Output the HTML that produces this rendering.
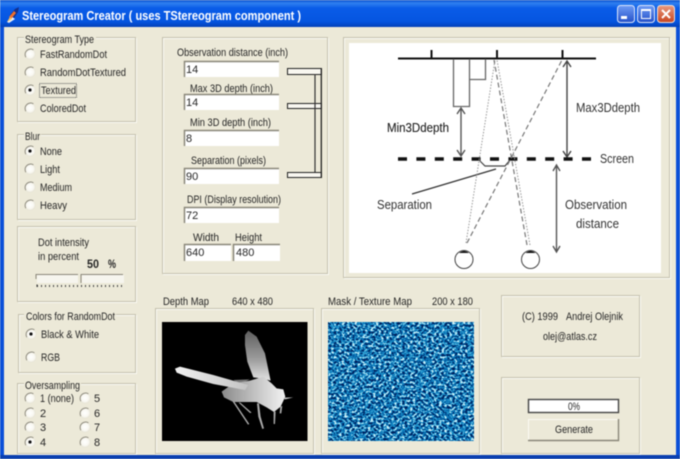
<!DOCTYPE html>
<html><head><meta charset="utf-8"><style>
html,body{margin:0;padding:0;width:680px;height:459px;overflow:hidden;background:#ece9d8}
svg{display:block;filter:blur(.45px)}
text{font-family:"Liberation Sans",sans-serif;font-size:11px;fill:#262626}
.g{fill:none;stroke:#c4c1ae;stroke-width:1}
.gw{fill:none;stroke:#fbfaf4;stroke-width:1}
.ed{fill:#fff}
.edl{stroke:#8a877a;stroke-width:1.5;fill:none}
</style></head><body>
<svg width="680" height="459" viewBox="0 0 680 459" xmlns="http://www.w3.org/2000/svg">
<defs>
<linearGradient id="tb" x1="0" y1="0" x2="0" y2="1"><stop offset="0" stop-color="#0a4fd0"/><stop offset=".12" stop-color="#2f80f0"/><stop offset=".3" stop-color="#0a5ce8"/><stop offset=".8" stop-color="#0555e0"/><stop offset="1" stop-color="#0340b8"/></linearGradient>
<linearGradient id="bb" x1="0" y1="0" x2="0" y2="1"><stop offset="0" stop-color="#6f9cf5"/><stop offset="1" stop-color="#2450c8"/></linearGradient>
<linearGradient id="bx" x1="0" y1="0" x2="0" y2="1"><stop offset="0" stop-color="#e89a80"/><stop offset="1" stop-color="#c8451f"/></linearGradient>
<linearGradient id="w1" x1="0" y1="0" x2="0" y2="1"><stop offset="0" stop-color="#5e5e5e"/><stop offset=".6" stop-color="#a0a0a0"/><stop offset="1" stop-color="#e4e4e4"/></linearGradient>
<linearGradient id="w2" x1="0" y1="0" x2="1" y2="0"><stop offset="0" stop-color="#f0f0f0"/><stop offset="1" stop-color="#c4c4c4"/></linearGradient>
<linearGradient id="bd" x1="0" y1="0" x2="1" y2="0"><stop offset="0" stop-color="#8a8a8a"/><stop offset=".5" stop-color="#c0c0c0"/><stop offset="1" stop-color="#f2f2f2"/></linearGradient>
<radialGradient id="rd"><stop offset="0" stop-color="#fff"/><stop offset=".7" stop-color="#f8f7f0"/><stop offset="1" stop-color="#e4e1d2"/></radialGradient>
<filter id="tex" x="0" y="0" width="100%" height="100%" color-interpolation-filters="sRGB">
<feTurbulence type="fractalNoise" baseFrequency=".38 .44" numOctaves="2" seed="7"/>
<feColorMatrix type="matrix" values="2.6 0 0 0 -.85 2.6 0 0 0 -.85 2.6 0 0 0 -.85 0 0 0 0 1"/>
<feComponentTransfer>
<feFuncR type="table" tableValues="0 0 0 .02 .04 .07 .12 .25 .5 .75 .85"/>
<feFuncG type="table" tableValues=".12 .18 .28 .38 .46 .52 .58 .66 .8 .9 .95"/>
<feFuncB type="table" tableValues=".35 .42 .55 .66 .72 .76 .8 .84 .9 .95 .98"/>
</feComponentTransfer>
</filter>
<filter id="sb"><feGaussianBlur stdDeviation=".6"/></filter>
<g id="ru"><circle r="5.500" fill="url(#rd)"/><path d="M-4.200 3.200A5.500 5.500 0 0 1 3.400-4.200" fill="none" stroke="#8f8c7e" stroke-width="1"/></g>
<g id="rc"><use href="#ru"/><circle r="1.600" fill="#111"/></g>
</defs>

<!-- window frame -->
<rect width="680" height="459" fill="#0a4fd8"/>
<rect x="0" y="0" width="680" height="27" fill="url(#tb)"/>
<rect x="0" y="455" width="680" height="4" fill="#0a3fb0"/>
<rect x="4" y="27" width="672" height="428" fill="#ece9d8"/>

<!-- title icon -->
<path d="M7 22L11 16L15 19L9 23Z" fill="#e8eef8"/>
<path d="M10 15L15 9L19 7L18 12L14 18Z" fill="#15308a"/>
<path d="M9 17L14 11L16 13L11 19Z" fill="#f0702a"/>
<path d="M7 22L10 17L12 19Z" fill="#f4c060"/>
<text x="22" y="20" style="font-size:13px;font-weight:bold;fill:#fff" textLength="279" lengthAdjust="spacingAndGlyphs">Stereogram Creator ( uses TStereogram component )</text>

<!-- window buttons -->
<rect x="617.500" y="5.500" width="17" height="17" rx="3" fill="url(#bb)" stroke="#dde6fa"/>
<rect x="621" y="16" width="6" height="3" fill="#fff"/>
<rect x="637.500" y="5.500" width="17" height="17" rx="3" fill="url(#bb)" stroke="#dde6fa"/>
<rect x="641.500" y="9.500" width="9" height="9" fill="none" stroke="#fff"/><rect x="641" y="9" width="10" height="2" fill="#fff"/>
<rect x="657.500" y="5.500" width="17" height="17" rx="3" fill="url(#bx)" stroke="#f0e0d8"/>
<path d="M662 10L670 18M670 10L662 18" stroke="#fff" stroke-width="2"/>

<!-- group boxes -->
<g>
<rect class="gw" x="18.500" y="38.500" width="118" height="84"/><rect class="g" x="17.500" y="37.500" width="118" height="84"/>
<rect class="gw" x="18.500" y="135.500" width="118" height="85"/><rect class="g" x="17.500" y="134.500" width="118" height="85"/>
<rect class="gw" x="18.500" y="227.500" width="118" height="75"/><rect class="g" x="17.500" y="226.500" width="118" height="75"/>
<rect class="gw" x="19.500" y="315.500" width="117" height="58"/><rect class="g" x="18.500" y="314.500" width="117" height="58"/>
<rect class="gw" x="18.500" y="384.500" width="118" height="70"/><rect class="g" x="17.500" y="383.500" width="118" height="70"/>
<rect class="gw" x="163.500" y="38.500" width="165" height="236"/><rect class="g" x="162.500" y="37.500" width="165" height="236"/>
<rect class="gw" x="344.500" y="38.500" width="326" height="240"/><rect class="g" x="343.500" y="37.500" width="326" height="240"/>
<rect class="gw" x="156.500" y="309.500" width="158" height="145"/><rect class="g" x="155.500" y="308.500" width="158" height="145"/>
<rect class="gw" x="322.500" y="309.500" width="158" height="145"/><rect class="g" x="321.500" y="308.500" width="158" height="145"/>
<rect class="gw" x="502.500" y="296.500" width="138" height="61"/><rect class="g" x="501.500" y="295.500" width="138" height="61"/>
<rect class="gw" x="502.500" y="378.500" width="138" height="76"/><rect class="g" x="501.500" y="377.500" width="138" height="76"/>
</g>

<!-- Stereogram Type -->
<rect x="24" y="32" width="72" height="10" fill="#ece9d8"/>
<text x="25" y="43" textLength="69" lengthAdjust="spacingAndGlyphs">Stereogram Type</text>
<use href="#ru" x="30" y="54"/><text x="40" y="58" textLength="67" lengthAdjust="spacingAndGlyphs">FastRandomDot</text>
<use href="#ru" x="30" y="72"/><text x="40" y="76" textLength="86" lengthAdjust="spacingAndGlyphs">RandomDotTextured</text>
<use href="#rc" x="30" y="90"/><text x="41" y="94" textLength="35" lengthAdjust="spacingAndGlyphs">Textured</text>
<rect x="39.500" y="83.500" width="37" height="14" fill="none" stroke="#555" stroke-dasharray="1 1"/>
<use href="#ru" x="30" y="108"/><text x="40" y="112" textLength="46" lengthAdjust="spacingAndGlyphs">ColoredDot</text>

<!-- Blur -->
<rect x="24" y="129" width="17" height="10" fill="#ece9d8"/>
<text x="25" y="140" textLength="15" lengthAdjust="spacingAndGlyphs">Blur</text>
<use href="#rc" x="30" y="151"/><text x="40" y="155" textLength="22" lengthAdjust="spacingAndGlyphs">None</text>
<use href="#ru" x="30" y="169"/><text x="40" y="173" textLength="20" lengthAdjust="spacingAndGlyphs">Light</text>
<use href="#ru" x="30" y="187"/><text x="40" y="191" textLength="32" lengthAdjust="spacingAndGlyphs">Medium</text>
<use href="#ru" x="30" y="205"/><text x="40" y="209" textLength="27" lengthAdjust="spacingAndGlyphs">Heavy</text>

<!-- Dot intensity -->
<text x="38" y="246" textLength="51" lengthAdjust="spacingAndGlyphs">Dot intensity</text>
<text x="38" y="260" textLength="41" lengthAdjust="spacingAndGlyphs">in percent</text>
<text x="87" y="268" style="font-weight:bold;font-size:11.5px" textLength="12" lengthAdjust="spacingAndGlyphs">50</text>
<text x="108" y="268" style="font-weight:bold;font-size:11.5px" textLength="8" lengthAdjust="spacingAndGlyphs">%</text>
<path d="M36 279V274.500H78" fill="none" stroke="#8a877a"/>
<path d="M81 283V274.500H123" fill="none" stroke="#8a877a"/>
<rect x="37" y="275" width="41" height="8" fill="#f6f5ee"/><rect x="82" y="275" width="42" height="8" fill="#f6f5ee"/>
<path d="M37 284.500V287" stroke="#333"/>
<line x1="37" y1="286" x2="124" y2="286" stroke="#444" stroke-width="2" stroke-dasharray="1 3"/>

<!-- Colors -->
<rect x="24" y="309" width="92" height="10" fill="#ece9d8"/>
<text x="26" y="320" textLength="89" lengthAdjust="spacingAndGlyphs">Colors for RandomDot</text>
<use href="#rc" x="31" y="334"/><text x="41" y="338" textLength="58" lengthAdjust="spacingAndGlyphs">Black &amp; White</text>
<use href="#ru" x="31" y="357"/><text x="41" y="361" textLength="19" lengthAdjust="spacingAndGlyphs">RGB</text>

<!-- Oversampling -->
<rect x="24" y="378" width="57" height="10" fill="#ece9d8"/>
<text x="25" y="389" textLength="55" lengthAdjust="spacingAndGlyphs">Oversampling</text>
<use href="#ru" x="30" y="398"/><text x="40" y="402" textLength="34" lengthAdjust="spacingAndGlyphs">1 (none)</text>
<use href="#ru" x="85" y="398"/><text x="94" y="402">5</text>
<use href="#ru" x="30" y="413"/><text x="40" y="417">2</text>
<use href="#ru" x="85" y="413"/><text x="94" y="417">6</text>
<use href="#ru" x="30" y="427"/><text x="40" y="431">3</text>
<use href="#ru" x="85" y="427"/><text x="94" y="431">7</text>
<use href="#rc" x="30" y="442"/><text x="40" y="446">4</text>
<use href="#ru" x="85" y="442"/><text x="94" y="446">8</text>

<!-- Parameter fields -->
<text x="177" y="56" textLength="111" lengthAdjust="spacingAndGlyphs">Observation distance (inch)</text>
<rect class="ed" x="184" y="61" width="95" height="16"/><path class="edl" d="M184.500 77V61.500H279"/><text x="186" y="73">14</text>
<text x="190" y="92" textLength="83" lengthAdjust="spacingAndGlyphs">Max 3D depth (inch)</text>
<rect class="ed" x="184" y="94" width="95" height="16"/><path class="edl" d="M184.500 110V94.500H279"/><text x="186" y="106">14</text>
<text x="190" y="126" textLength="81" lengthAdjust="spacingAndGlyphs">Min 3D depth (inch)</text>
<rect class="ed" x="184" y="130" width="95" height="16"/><path class="edl" d="M184.500 146V130.500H279"/><text x="186" y="142">8</text>
<text x="191" y="164" textLength="75" lengthAdjust="spacingAndGlyphs">Separation (pixels)</text>
<rect class="ed" x="184" y="168" width="95" height="16"/><path class="edl" d="M184.500 184V168.500H279"/><text x="186" y="180">90</text>
<text x="187" y="203" textLength="94" lengthAdjust="spacingAndGlyphs">DPI (Display resolution)</text>
<rect class="ed" x="184" y="207" width="95" height="16"/><path class="edl" d="M184.500 223V207.500H279"/><text x="186" y="219">72</text>
<text x="193" y="241" textLength="26" lengthAdjust="spacingAndGlyphs">Width</text>
<text x="235" y="241" textLength="27" lengthAdjust="spacingAndGlyphs">Height</text>
<rect class="ed" x="184" y="244" width="47" height="17"/><path class="edl" d="M184.500 261V244.500H231"/><text x="186" y="256">640</text>
<rect class="ed" x="233" y="244" width="47" height="17"/><path class="edl" d="M233.500 261V244.500H280"/><text x="236" y="256">480</text>

<!-- Bracket -->
<g fill="#f8f7f0" stroke="#222" stroke-width="1">
<rect x="287.500" y="68.500" width="34" height="6"/><rect x="287.500" y="103.500" width="34" height="5"/><rect x="287.500" y="172.500" width="34" height="5"/>
</g>
<path d="M315 74V172" stroke="#333" stroke-width="1.200"/><path d="M321.300 68V178" stroke="#222" stroke-width="1.300"/>

<!-- Diagram -->
<rect x="349" y="43" width="312" height="230" fill="#fff"/>
<g fill="none">
<path d="M398 58.500H596" stroke="#111" stroke-width="2"/>
<path d="M431.500 50V58M497 50V58M562.500 50V58" stroke="#111" stroke-width="2"/>
<path d="M453.500 59V106.500H469.500V59M469.500 79.500H485.500V59" stroke="#666" stroke-width="1.300"/>
<path d="M461 109V155M457 114L461 108L465 114M457 150L461 156L465 150" stroke="#555" stroke-width="1.400"/>
<path d="M567 62V157M563 67L567 61L571 67M563 151L567 157L571 151" stroke="#444" stroke-width="1.400"/>
<path d="M556.500 165V252M553 171L556.500 165L560 171M553 246L556.500 252L560 246" stroke="#555" stroke-width="1.400"/>
<path d="M398 159H591" stroke="#111" stroke-width="3.500" stroke-dasharray="9 9.400"/>
<path d="M480 161L485 166H505L510 160" stroke="#444" stroke-width="1.200"/>
<path d="M412 194L496 169" stroke="#333" stroke-width="1.200"/>
<path d="M466 243L495 60M530 245L497 60" stroke="#999" stroke-width="1" stroke-dasharray="1.500 1.500"/>
<path d="M467 243L562 60M527 245L494 60" stroke="#777" stroke-width="1.200" stroke-dasharray="5 3"/>
<circle cx="464" cy="259.500" r="9" stroke="#444" stroke-width="1"/>
<circle cx="530.500" cy="259.500" r="9" stroke="#444" stroke-width="1"/>
</g>
<path d="M459 253Q464 249 469 253Z" fill="#111"/><path d="M525.500 253Q530.500 249 535.500 253Z" fill="#111"/>
<text x="387" y="132" style="font-size:13px;fill:#222;stroke:#222;stroke-width:.12" textLength="62" lengthAdjust="spacingAndGlyphs">Min3Ddepth</text>
<text x="576" y="112" style="font-size:13px;fill:#333" textLength="64" lengthAdjust="spacingAndGlyphs">Max3Ddepth</text>
<text x="600" y="163" style="font-size:13px;fill:#333" textLength="34" lengthAdjust="spacingAndGlyphs">Screen</text>
<text x="377" y="209" style="font-size:13px;fill:#333" textLength="55" lengthAdjust="spacingAndGlyphs">Separation</text>
<text x="565" y="209" style="font-size:13px;fill:#333" textLength="62" lengthAdjust="spacingAndGlyphs">Observation</text>
<text x="576" y="228" style="font-size:13px;fill:#333" textLength="43" lengthAdjust="spacingAndGlyphs">distance</text>

<!-- Depth map -->
<rect x="155" y="296" width="142" height="12" fill="#ece9d8"/>
<text x="163" y="305" textLength="46" lengthAdjust="spacingAndGlyphs">Depth Map</text>
<text x="232" y="305" textLength="41" lengthAdjust="spacingAndGlyphs">640 x 480</text>
<rect x="162" y="322" width="145.500" height="119" fill="#000"/>
<g transform="translate(0 220) scale(.3333)" filter="url(#sb)">
<path d="M735 345L745 332L770 350L795 400L812 482L790 476L760 472L742 425L735 375Z" fill="url(#w1)"/>
<path d="M700 480L750 478L720 492Z" fill="#777"/>
<path d="M665 515L700 490L750 482L790 470L815 490L830 505L850 508L856 530L842 560L822 576L800 562L770 546L700 546L672 532Z" fill="url(#bd)"/>
<path d="M525 446L540 440L640 465L745 495L735 510L640 492L560 470L530 458Z" fill="url(#w2)"/>
<path d="M850 533L880 532L855 538Z" fill="#ccc"/>
<path d="M698 545L703 545L748 612L744 614ZM716 548L721 548L755 578L750 579ZM771 550L777 550L782 590L792 625L787 627L775 590ZM821 575L827 575L825 612L821 612ZM841 560L847 558L844 580L839 580Z" fill="#aaa"/>
</g>

<!-- Mask -->
<rect x="322" y="296" width="150" height="12" fill="#ece9d8"/>
<text x="328" y="305" textLength="84" lengthAdjust="spacingAndGlyphs">Mask / Texture Map</text>
<text x="432" y="305" textLength="41" lengthAdjust="spacingAndGlyphs">200 x 180</text>
<rect x="328" y="322" width="146" height="119" fill="#1a7fc0"/>
<rect x="328" y="322" width="146" height="119" filter="url(#tex)"/>

<!-- Copyright -->
<text x="522" y="320" textLength="36" lengthAdjust="spacingAndGlyphs">(C) 1999</text>
<text x="566" y="320" textLength="57" lengthAdjust="spacingAndGlyphs">Andrej Olejnik</text>
<text x="543" y="340" textLength="54" lengthAdjust="spacingAndGlyphs">olej@atlas.cz</text>

<!-- Progress + Generate -->
<rect x="528.500" y="399.500" width="90" height="13" fill="#fff" stroke="#444" stroke-width="1.400"/>
<text x="568" y="410" textLength="12" lengthAdjust="spacingAndGlyphs">0%</text>
<rect x="528" y="419" width="91" height="22" fill="#ece9d8"/>
<path d="M528.500 441V419.500H619" fill="none" stroke="#fbfaf4"/>
<path d="M528 440.500H618.500V419" fill="none" stroke="#8a877a" stroke-width="1.400"/>
<text x="555" y="433" textLength="38" lengthAdjust="spacingAndGlyphs">Generate</text>
</svg>
</body></html>
